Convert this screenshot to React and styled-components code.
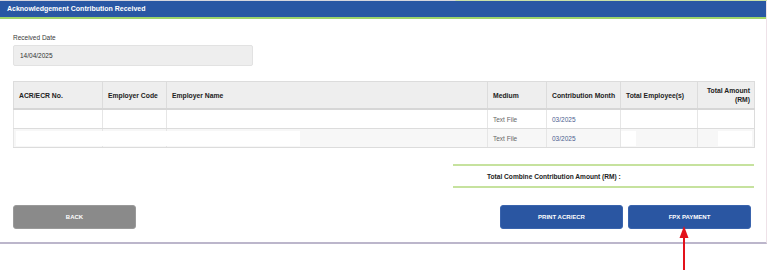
import React from 'react';
import styled, { createGlobalStyle } from 'styled-components';

const GlobalStyle = createGlobalStyle`
  html, body {
    margin: 0;
    padding: 0;
    background: #fff;
    font-family: 'Liberation Sans', Arial, sans-serif;
  }
`;

const Page = styled.div`
  position: relative;
  width: 768px;
  height: 274px;
  overflow: hidden;
  background: #fff;
`;

const TopStrip = styled.div`
  height: 1px;
  width: 767px;
  background: linear-gradient(to right, #d6d6de 0, #d6d6de 455px, #c9e0a8 456px, #c9e0a8 100%);
`;

const Panel = styled.div`
  width: 766px;
  border-right: 1px solid #eee2e8;
  border-bottom: 2px solid #bcb6cb;
`;

const Header = styled.div`
  height: 16px;
  background: #2957a4;
  border-bottom: 2px solid #9ed46a;
  color: #fff;
  font-size: 7px;
  font-weight: bold;
  line-height: 16px;
  padding-left: 7px;
`;

const Body = styled.div`
  padding: 14px 12px 13px 13px;
`;

const Label = styled.div`
  font-size: 6.5px;
  color: #3a3a3a;
  line-height: 9px;
  margin-bottom: 3px;
`;

const DateBox = styled.div`
  width: 232px;
  height: 19px;
  background: #eeeeee;
  border: 1px solid #e2e2e2;
  border-radius: 2px;
  padding-left: 6px;
  font-size: 6.5px;
  color: #333;
  line-height: 19px;
`;

const TableWrap = styled.div`
  position: relative;
  margin-top: 15px;
  width: 741px;
`;

const Table = styled.table`
  width: 741px;
  border-collapse: collapse;
  table-layout: fixed;
  font-size: 6.5px;
  border: 1px solid #dcdcdc;
`;

const Th = styled.th`
  height: 26px;
  background: #eeeeee;
  color: #222;
  font-size: 6.8px;
  font-weight: bold;
  text-align: ${p => (p.$right ? 'right' : 'left')};
  padding: 0 ${p => (p.$right ? '4px' : '0')} 0 5px;
  border-left: 1px solid #dcdcdc;
  border-bottom: 2px solid #d6d6d6;
  line-height: 9px;
  vertical-align: middle;
`;

const Tr = styled.tr`
  background: ${p => (p.$striped ? '#f7f7f7' : '#fff')};
`;

const Td = styled.td`
  height: 18px;
  padding: 0 5px;
  color: ${p => (p.$blue ? '#4d5e8f' : '#666')};
  border-left: 1px solid #e6e6e6;
  border-bottom: 1px solid #dcdcdc;
`;

const Redaction = styled.div`
  position: absolute;
  background: #fff;
`;

const TotalBar = styled.div`
  margin: 16px 0 0 440px;
  width: 301px;
  height: 24px;
  border-top: 2px solid #c6e29e;
  border-bottom: 2px solid #c6e29e;
  display: flex;
  align-items: center;
  padding-left: 34px;
  box-sizing: border-box;
  font-size: 6.6px;
  font-weight: bold;
  color: #222;
`;

const ButtonRow = styled.div`
  display: flex;
  align-items: center;
  margin-top: 17px;
  width: 738px;
`;

const Button = styled.div`
  width: 123px;
  height: 24px;
  border-radius: 3px;
  background: ${p => (p.$grey ? '#8a8a8a' : '#2a56a2')};
  border: 1px solid ${p => (p.$grey ? '#9a9a9a' : '#3a64ad')};
  box-sizing: border-box;
  color: #fff;
  font-size: 6px;
  font-weight: bold;
  display: flex;
  align-items: center;
  justify-content: center;
  margin-left: ${p => p.$gap || 0}px;
`;

const Spacer = styled.div`
  flex: 1;
`;

const Arrow = styled.svg`
  position: absolute;
  left: 678px;
  top: 225px;
`;

const rows = [
  { medium: 'Text File', month: '03/2025' },
  { medium: 'Text File', month: '03/2025' }
];

export default function App() {
  return (
    <Page>
      <GlobalStyle />
      <TopStrip />
      <Panel>
        <Header>Acknowledgement Contribution Received</Header>
        <Body>
          <Label>Received Date</Label>
          <DateBox>14/04/2025</DateBox>

          <TableWrap>
            <Table>
              <colgroup>
                <col style={{ width: 89 }} />
                <col style={{ width: 64 }} />
                <col style={{ width: 321 }} />
                <col style={{ width: 59 }} />
                <col style={{ width: 74 }} />
                <col style={{ width: 77 }} />
                <col style={{ width: 57 }} />
              </colgroup>
              <thead>
                <tr>
                  <Th>ACR/ECR No.</Th>
                  <Th>Employer Code</Th>
                  <Th>Employer Name</Th>
                  <Th>Medium</Th>
                  <Th>Contribution Month</Th>
                  <Th>Total Employee(s)</Th>
                  <Th $right>
                    Total Amount
                    <br />
                    (RM)
                  </Th>
                </tr>
              </thead>
              <tbody>
                {rows.map((r, i) => (
                  <Tr key={i} $striped={i % 2 === 1}>
                    <Td />
                    <Td />
                    <Td />
                    <Td>{r.medium}</Td>
                    <Td $blue>{r.month}</Td>
                    <Td />
                    <Td />
                  </Tr>
                ))}
              </tbody>
            </Table>
            <Redaction style={{ left: 3, top: 50, width: 284, height: 15 }} />
            <Redaction style={{ left: 608, top: 50, width: 15, height: 15 }} />
            <Redaction style={{ left: 705, top: 50, width: 34, height: 15 }} />
          </TableWrap>

          <TotalBar>Total Combine Contribution Amount (RM) :</TotalBar>

          <ButtonRow>
            <Button $grey>BACK</Button>
            <Spacer />
            <Button>PRINT ACR/ECR</Button>
            <Button $gap={5}>FPX PAYMENT</Button>
          </ButtonRow>
        </Body>
      </Panel>

      <Arrow width="12" height="46" viewBox="0 0 12 46">
        <path d="M6 1 L10.5 13 L1.5 13 Z" fill="#e3121b" />
        <rect x="5" y="12" width="2" height="33" fill="#e3121b" />
      </Arrow>
    </Page>
  );
}
